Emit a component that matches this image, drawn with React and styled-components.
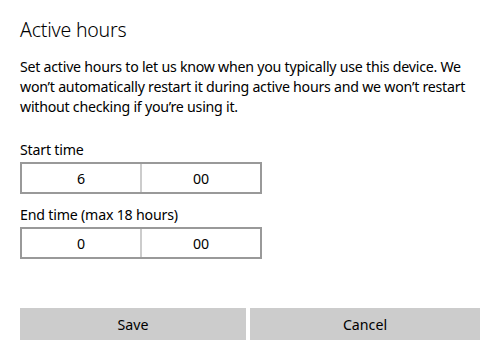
import styled, { createGlobalStyle } from "styled-components";

const GlobalStyle = createGlobalStyle`
  body {
    margin: 0;
    background: #ffffff;
    font-family: 'Noto Sans', 'Open Sans', sans-serif;
    color: #000000;
  }
`;

const Dialog = styled.main`
  width: 496px;
  height: 358px;
  box-sizing: border-box;
  padding: 16px 16px 0 20px;
  display: flex;
  flex-direction: column;
`;

const Title = styled.h1`
  margin: 0;
  font-size: 19.5px;
  font-weight: 300;
  line-height: 28px;
  letter-spacing: -0.2px;
`;

const Description = styled.p`
  margin: 13px 0 0;
  font-size: 14.2px;
  line-height: 20px;
  letter-spacing: -0.25px;
  white-space: nowrap;
`;

const Field = styled.div`
  display: flex;
  flex-direction: column;
  gap: 2px;
  margin-top: ${(p) => p.$top}px;
`;

const Label = styled.label`
  font-size: 14.2px;
  line-height: 20px;
  letter-spacing: -0.2px;
`;

const TimePicker = styled.div`
  width: 242px;
  height: 32px;
  box-sizing: border-box;
  border: 2px solid #999999;
  display: flex;
`;

const Segment = styled.div`
  flex: 1;
  display: flex;
  align-items: center;
  justify-content: center;
  font-size: 14.2px;
  & + & {
    border-left: 2px solid #cccccc;
  }
`;

const Actions = styled.div`
  margin-top: auto;
  margin-bottom: 18px;
  display: flex;
  gap: 4px;
`;

const Button = styled.button`
  width: ${(p) => p.$width}px;
  height: 32px;
  border: none;
  background: #cccccc;
  font-family: inherit;
  font-size: 14.2px;
  color: #000000;
  padding: 0;
`;

function TimeField({ label, hours, minutes, top }) {
  return (
    <Field $top={top}>
      <Label>{label}</Label>
      <TimePicker>
        <Segment>{hours}</Segment>
        <Segment>{minutes}</Segment>
      </TimePicker>
    </Field>
  );
}

export default function App() {
  return (
    <>
      <GlobalStyle />
      <Dialog>
        <Title>Active hours</Title>
        <Description>
          Set active hours to let us know when you typically use this device. We
          <br />
          won’t automatically restart it during active hours and we won’t restart
          <br />
          without checking if you’re using it.
        </Description>
        <TimeField label="Start time" hours="6" minutes="00" top={23} />
        <TimeField label="End time (max 18 hours)" hours="0" minutes="00" top={11} />
        <Actions>
          <Button $width={226}>Save</Button>
          <Button $width={230}>Cancel</Button>
        </Actions>
      </Dialog>
    </>
  );
}
